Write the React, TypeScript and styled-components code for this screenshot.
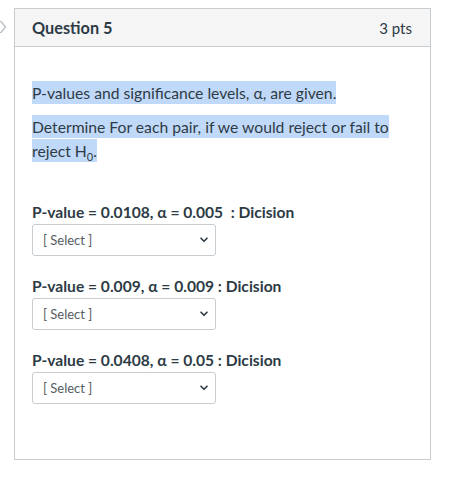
import React from "react";
import styled, { createGlobalStyle } from "styled-components";

const GlobalStyle = createGlobalStyle`
  body {
    margin: 0;
    background: #ffffff;
    font-family: Lato, "Noto Sans", sans-serif;
    color: #2d3b45;
  }
`;

const Page = styled.div`
  display: flex;
  align-items: flex-start;
  padding-top: 8px;
`;

const FlagClip = styled.div`
  width: 7px;
  height: 38px;
  overflow: hidden;
  display: flex;
  align-items: center;
  flex-shrink: 0;
`;

const FlagIcon = styled.svg`
  margin-left: -9px;
  flex-shrink: 0;
`;

const Card = styled.div`
  margin-left: 7px;
  width: 417px;
  height: 452px;
  border: 1px solid #c7cdd1;
  box-sizing: border-box;
  display: flex;
  flex-direction: column;
`;

const Header = styled.div`
  display: flex;
  justify-content: space-between;
  align-items: center;
  height: 37px;
  padding: 0 18px 0 17px;
  background-color: #f5f5f5;
  border-bottom: 1px solid #c7cdd1;
`;

const Title = styled.span`
  font-size: 16.3px;
  font-weight: 700;
  color: #2d3b45;
`;

const Points = styled.span`
  font-size: 15px;
  color: #2d3b45;
`;

const Body = styled.div`
  padding: 33px 17px 0 17px;
`;

const Paragraph = styled.p`
  margin: 0 0 10px 0;
  font-size: 15.7px;
  line-height: 24px;
`;

const Highlight = styled.span`
  background-color: #c1d9f9;
  padding: 2.5px 0;
`;

const Sub = styled.sub`
  line-height: 0;
  font-size: 11px;
`;

const Questions = styled.div`
  display: flex;
  flex-direction: column;
  gap: 20px;
  margin-top: 40px;
`;

const Item = styled.div`
  display: flex;
  flex-direction: column;
`;

const Label = styled.div`
  font-size: 15.6px;
  font-weight: 700;
  line-height: 21px;
`;

const SelectWrap = styled.div`
  position: relative;
  width: 184px;
  height: 32px;
  margin-top: 1px;
`;

const Select = styled.select`
  appearance: none;
  width: 100%;
  height: 100%;
  border: 1px solid #c7cdd1;
  border-radius: 3px;
  background: #ffffff;
  font-family: Lato, "Noto Sans", sans-serif;
  font-size: 13px;
  color: #555c62;
  padding: 0 24px 0 10px;
  outline: none;
`;

const Chevron = styled.svg`
  position: absolute;
  right: 8px;
  top: 13px;
  pointer-events: none;
`;

const items = [
  "P-value = 0.0108, \u03b1 = 0.005\u00a0 : Dicision",
  "P-value = 0.009, \u03b1 = 0.009 : Dicision",
  "P-value = 0.0408, \u03b1 = 0.05 : Dicision",
];

const App: React.FC = () => {
  return (
    <>
      <GlobalStyle />
      <Page>
        <FlagClip>
          <FlagIcon width="16" height="16" viewBox="0 0 16 16">
            <path
              d="M3 2.5 H10 L14.5 8 L10 13.5 H3 Z"
              fill="none"
              stroke="#b5bcc2"
              strokeWidth="1.2"
              strokeLinejoin="round"
            />
          </FlagIcon>
        </FlagClip>
        <Card>
          <Header>
            <Title>Question 5</Title>
            <Points>3 pts</Points>
          </Header>
          <Body>
            <Paragraph>
              <Highlight>P-values and significance levels, α, are given.</Highlight>
            </Paragraph>
            <Paragraph>
              <Highlight>
                Determine For each pair, if we would reject or fail to reject H<Sub>0</Sub>.
              </Highlight>
            </Paragraph>
            <Questions>
              {items.map((label) => (
                <Item key={label}>
                  <Label>{label}</Label>
                  <SelectWrap>
                    <Select defaultValue="">
                      <option value="">[ Select ]</option>
                      <option value="reject">Reject H0</option>
                      <option value="fail">Fail to reject H0</option>
                    </Select>
                    <Chevron width="8" height="6" viewBox="0 0 8 6">
                      <path
                        d="M1 1.2 L4 4.3 L7 1.2"
                        fill="none"
                        stroke="#2d3b45"
                        strokeWidth="1.6"
                        strokeLinecap="round"
                        strokeLinejoin="round"
                      />
                    </Chevron>
                  </SelectWrap>
                </Item>
              ))}
            </Questions>
          </Body>
        </Card>
      </Page>
    </>
  );
};

export default App;
